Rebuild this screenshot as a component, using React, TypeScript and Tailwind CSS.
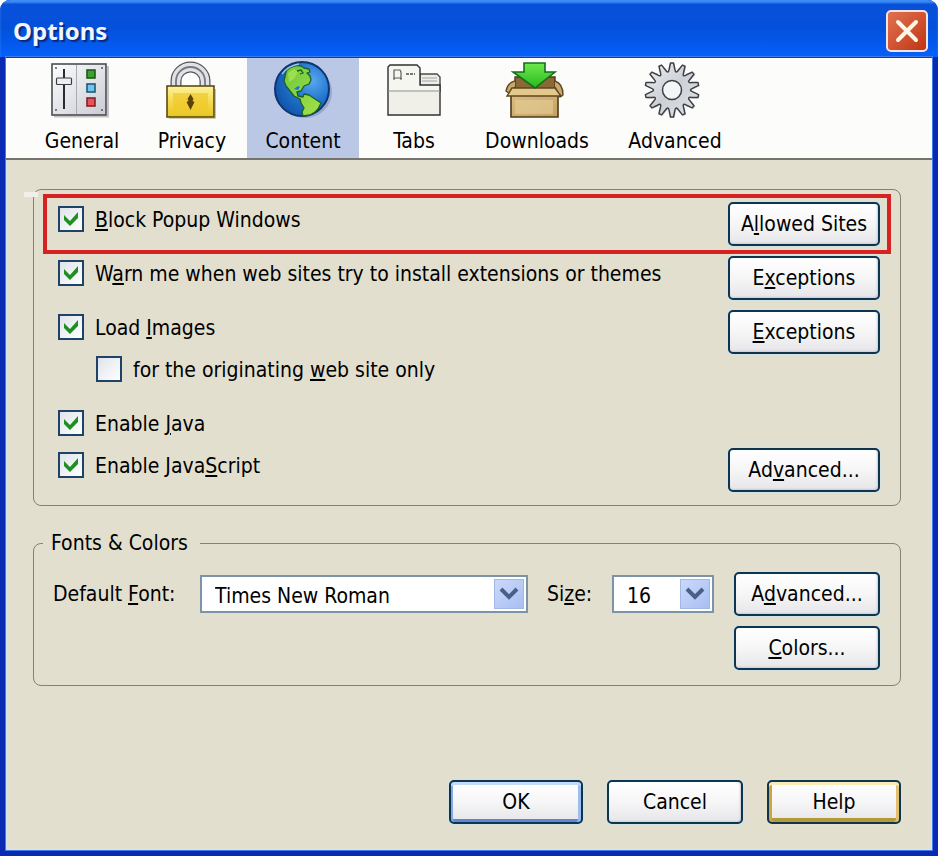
import React, { useState } from 'react';
import type { ReactNode } from 'react';

const FONT = "font-['DejaVu_Sans_Condensed','Noto_Sans',sans-serif]";

function GeneralIcon() {
  return (
    <svg width="64" height="58" viewBox="0 0 64 58" aria-hidden="true">
      <defs>
        <linearGradient id="panel" x1="0" y1="0" x2="1" y2="1">
          <stop offset="0" stopColor="#fdfdfd" />
          <stop offset="1" stopColor="#c9ccd4" />
        </linearGradient>
      </defs>
      <path d="M4 55.500H58V5" fill="none" stroke="#c4c4c4" strokeWidth="2" />
      <rect x="2" y="3" width="54" height="51" fill="url(#panel)" stroke="#4c4d52" strokeWidth="1.6" />
      <path d="M26.500 4V53" stroke="#a9abb2" />
      <path d="M14 8V48" stroke="#2a2b30" strokeWidth="2" />
      <rect x="6.500" y="17" width="15" height="6.500" rx="1" fill="#eceef2" stroke="#3b3c42" strokeWidth="1.200" />
      <rect x="37" y="9" width="8" height="8" fill="#3ea12f" stroke="#1d5c18" strokeWidth="1.600" />
      <rect x="37" y="23" width="8" height="8" fill="#6fc6ec" stroke="#1e5878" strokeWidth="1.600" />
      <rect x="37" y="37" width="8" height="8" fill="#e2585a" stroke="#8a2024" strokeWidth="1.600" />
      <g fill="#55565c">
        <circle cx="6" cy="7" r="1" />
        <circle cx="52" cy="7" r="1" />
        <circle cx="6" cy="49" r="1" />
        <circle cx="52" cy="49" r="1" />
      </g>
    </svg>
  );
}

function PrivacyIcon() {
  return (
    <svg width="54" height="58" viewBox="0 0 54 58" aria-hidden="true">
      <defs>
        <linearGradient id="brass" x1="0" y1="0" x2="0" y2="1">
          <stop offset="0" stopColor="#fdf3a0" />
          <stop offset="0.5" stopColor="#f4da4e" />
          <stop offset="1" stopColor="#e8c51f" />
        </linearGradient>
      </defs>
      <path d="M11 26V20a14.500 14 0 0 1 29 0v6" fill="none" stroke="#55575d" strokeWidth="11" />
      <path d="M11 26V20a14.500 14 0 0 1 29 0v6" fill="none" stroke="#e0e2e6" strokeWidth="8.500" />
      <path d="M11 26V20a14.500 14 0 0 1 29 0v6" fill="none" stroke="#77797f" strokeWidth="1.800" />
      <path d="M4 57.300H50.500V28" fill="none" stroke="#c9c2a0" />
      <rect x="2" y="25" width="47" height="31" fill="url(#brass)" stroke="#5c4a10" strokeWidth="1.600" />
      <rect x="8" y="32" width="35" height="18" fill="#efc828" opacity=".65" />
      <path d="M25.500 33l3 5-1 2 2 1-4 8-4-8 2-1-1-2z" fill="#5a4208" />
    </svg>
  );
}

function ContentIcon() {
  return (
    <svg width="60" height="58" viewBox="0 0 60 58" aria-hidden="true">
      <defs>
        <radialGradient id="sea" cx=".68" cy=".35" r=".7">
          <stop offset="0" stopColor="#5ba8ee" />
          <stop offset=".55" stopColor="#1f74cf" />
          <stop offset="1" stopColor="#1456ac" />
        </radialGradient>
        <linearGradient id="land" x1="0" y1="0" x2="1" y2="1">
          <stop offset="0" stopColor="#6fc93c" />
          <stop offset="1" stopColor="#a4e04a" />
        </linearGradient>
      </defs>
      <ellipse cx="32" cy="31" rx="27" ry="26" fill="#7f93bd" opacity=".6" />
      <circle cx="29" cy="28" r="27" fill="url(#sea)" stroke="#0f3472" strokeWidth="2" />
      <path
        d="M14 9C18 5 24 4 28 5l3 2 5 1 1 3-3 1 3 3 1 4-2 4-5 2-3 5-4 1 1 4 5 1 1-3 5 1 6 4 6 4-3 6-3 3-5 3-7 1-1-4 2-4-3-5-1-4-6-3-4-5-4-5-2-5 2-9z"
        fill="url(#land)"
        stroke="#1c5f2a"
        strokeWidth="1.300"
        strokeLinejoin="round"
      />
      <path d="M15 12l6-4 4 3-4 7-5 3z" fill="#b4ea55" opacity=".6" />
      <path d="M24 10l4-1 2 3-3 1" fill="none" stroke="#1c5f2a" strokeWidth="1.300" />
      <path d="M21 28l4-3 2 1-2 3z" fill="#1f74cf" />
      <path d="M9 13A26 26 0 0 1 26 3" fill="none" stroke="#d2eaff" strokeWidth="1.500" opacity=".7" />
    </svg>
  );
}

function TabsIcon() {
  return (
    <svg width="56" height="54" viewBox="0 0 56 54" aria-hidden="true">
      <path d="M34 11H51l3 3V28H34z" fill="#eeeee9" stroke="#4a4a4a" strokeWidth="1.400" />
      <path d="M2 52V4l2-2H31l3 3V22H54V52z" fill="#f6f6f1" stroke="#303030" strokeWidth="1.400" />
      <path d="M2 28H54" stroke="#8e8e88" />
      <rect x="3" y="29" width="50" height="22" fill="#f0f0e8" />
      <path d="M8 7h6l1 2v6H8zM7 16h2M14 16h2" fill="none" stroke="#5d5d5d" strokeWidth="1.200" />
      <path d="M20 11h9" stroke="#77776f" strokeWidth="2" strokeDasharray="3 1" />
      <path d="M36 15h15M36 18h15" stroke="#a5a59d" />
    </svg>
  );
}

function DownloadsIcon() {
  return (
    <svg width="66" height="58" viewBox="0 0 66 58" aria-hidden="true">
      <defs>
        <linearGradient id="box" x1="0" y1="0" x2="1" y2="1">
          <stop offset="0" stopColor="#d9bd80" />
          <stop offset="1" stopColor="#c5a061" />
        </linearGradient>
        <linearGradient id="arrow" x1="0" y1="0" x2="0" y2="1">
          <stop offset="0" stopColor="#6fe84c" />
          <stop offset="1" stopColor="#27ba20" />
        </linearGradient>
      </defs>
      <path d="M11 16H51V32H11z" fill="#8b6937" stroke="#4e3919" strokeWidth="1.400" />
      <path d="M11 20C6 21 3 25 2 30l3 2 6-6M51 20c6 2 8 8 8 14l-3 2-5-10" fill="#c8a86b" stroke="#5d4621" strokeWidth="1.400" />
      <path d="M7 34H54V56H7z" fill="url(#box)" stroke="#4e3919" strokeWidth="1.600" />
      <path d="M8 27H51l6 8H3z" fill="#e3c88e" stroke="#5d4621" strokeWidth="1.400" />
      <rect x="11" y="39" width="38" height="14" fill="#e6cf99" opacity=".6" />
      <path d="M20 2H41V11H51L31 27 9 11H20z" fill="url(#arrow)" stroke="#12701a" strokeWidth="1.600" />
    </svg>
  );
}

const TEETH = 14;

// one pointed tooth per step, all around the centre
function gearPath() {
  const step = (Math.PI * 2) / TEETH;
  const at = (angle: number, r: number) =>
    `${(29 + Math.sin(angle) * r).toFixed(1)} ${(29 - Math.cos(angle) * r).toFixed(1)}`;
  let d = '';
  for (let i = 0; i < TEETH; i++) {
    const a = i * step;
    d += `${i === 0 ? 'M' : 'L'}${at(a - step * 0.12, 27)}L${at(a + step * 0.12, 27)}`;
    d += `L${at(a + step * 0.3, 21)}Q${at(a + step * 0.5, 16)} ${at(a + step * 0.7, 21)}`;
  }
  return d + 'Z';
}

function AdvancedIcon() {
  return (
    <svg width="64" height="58" viewBox="0 0 64 58" aria-hidden="true">
      <defs>
        <linearGradient id="steel" x1="0" y1="0" x2="1" y2="1">
          <stop offset="0" stopColor="#eceef1" />
          <stop offset=".5" stopColor="#cdd0d6" />
          <stop offset="1" stopColor="#e2e4e8" />
        </linearGradient>
      </defs>
      <path d={gearPath()} transform="translate(1 1)" fill="#b9bbc0" opacity=".6" />
      <path d={gearPath()} fill="url(#steel)" stroke="#3e4046" strokeWidth="1.500" strokeLinejoin="round" />
      <circle cx="29" cy="29" r="9.500" fill="#f4f5f7" stroke="#3e4046" strokeWidth="1.500" />
    </svg>
  );
}

const tabs = [
  { name: 'General', icon: <GeneralIcon />, width: 'w-[110px]' },
  { name: 'Privacy', icon: <PrivacyIcon />, width: 'w-[110px]' },
  { name: 'Content', icon: <ContentIcon />, width: 'w-[112px]' },
  { name: 'Tabs', icon: <TabsIcon />, width: 'w-[110px]' },
  { name: 'Downloads', icon: <DownloadsIcon />, width: 'w-[136px]' },
  { name: 'Advanced', icon: <AdvancedIcon />, width: 'w-[140px]' },
];

function Key({ children }: { children: ReactNode }) {
  return <span className="underline decoration-2 underline-offset-2">{children}</span>;
}

interface CheckProps {
  id: string;
  defaultChecked?: boolean;
  children: ReactNode;
}

function Check({ id, defaultChecked = false, children }: CheckProps) {
  return (
    <div className="flex h-[26px] items-center gap-[11px]">
      <div className="grid shrink-0">
        <input
          id={id}
          type="checkbox"
          defaultChecked={defaultChecked}
          className="peer col-start-1 row-start-1 size-[26px] appearance-none border-2 border-[#1d4468] bg-linear-to-br from-[#dfe3ea] to-white"
        />
        <svg viewBox="0 0 26 26" className="pointer-events-none invisible col-start-1 row-start-1 size-[26px] peer-checked:visible" aria-hidden="true">
          <path d="M6 9l6 6 8-9v6l-8 8-6-6z" fill="#1f8f22" />
        </svg>
      </div>
      <label htmlFor={id} className="pt-[2px] whitespace-nowrap">{children}</label>
    </div>
  );
}

interface XpButtonProps {
  children: ReactNode;
  width: string;
  look?: 'plain' | 'default' | 'hot';
}

function XpButton({ children, width, look = 'plain' }: XpButtonProps) {
  const looks = {
    plain: 'shadow-[inset_-1px_-1px_2px_#c9cbd6,0_0_2px_1px_#d3e3e6]',
    default: 'shadow-[inset_0_3px_0_#c3dbfa,inset_2px_0_0_#86a9e6,inset_-3px_0_0_#9dbcf0,inset_0_-3px_0_#5f86d2,0_0_2px_1px_#d3e3e6]',
    hot: 'shadow-[inset_0_3px_0_#f8ecb8,inset_3px_0_0_#cfa544,inset_-3px_0_0_#e2c070,inset_0_-4px_0_#b5983a,0_0_2px_1px_#e6e3c8]',
  };
  return (
    <button
      type="button"
      className={`h-11 shrink-0 rounded-[5px] border-2 border-[#0d3550] bg-linear-to-b from-white via-[#f6f6f6] to-[#e6e6ea] whitespace-nowrap ${width} ${looks[look]}`}
    >
      {children}
    </button>
  );
}

interface DropDownProps {
  id: string;
  options: string[];
  className: string;
}

function DropDown({ id, options, className }: DropDownProps) {
  return (
    <div className={`grid h-[38px] items-center ${className}`}>
      <select id={id} className="col-start-1 row-start-1 h-full w-full appearance-none border-2 border-[#7d93a8] bg-white pt-1 pl-[13px]">
        {options.map((option) => (
          <option key={option}>{option}</option>
        ))}
      </select>
      <span className="pointer-events-none col-start-1 row-start-1 mr-1 flex h-[30px] w-[30px] items-center justify-center justify-self-end border border-[#a3b7e6] bg-linear-to-br from-[#cbd8fb] to-[#a9bff2]">
        <svg width="20" height="14" viewBox="0 0 20 14" aria-hidden="true">
          <path d="M2 2l8 8 8-8" fill="none" stroke="#4a5f88" strokeWidth="4" />
        </svg>
      </span>
    </div>
  );
}

export default function App() {
  const [active, setActive] = useState('Content');

  return (
    <div className={`flex min-h-screen flex-col overflow-hidden rounded-t-[10px] bg-[#0a2ab4] text-[21px] leading-[26px] text-black ${FONT}`}>
      {/* Title bar */}
      <header className="flex h-[57px] items-center justify-between bg-linear-to-b from-[#0a50d8] via-[#0450dc] to-[#0560fa] pt-1 pr-[10px] pl-[13px] shadow-[inset_0_3px_2px_#3c8cf5]">
        <h1 className="font-['Noto_Sans',sans-serif] text-[24px] font-bold text-[#f0f6ff] [text-shadow:2px_2px_1px_#0a2a80]">Options</h1>
        <button type="button" aria-label="Close" className="flex size-[42px] items-center justify-center rounded-[5px] border-2 border-[#f3e4e6] bg-linear-to-br from-[#e0714f] to-[#bf3410]">
          <svg width="24" height="24" viewBox="0 0 24 24" aria-hidden="true">
            <path d="M3 3l18 18M21 3L3 21" stroke="#fff6e6" strokeWidth="4" strokeLinecap="round" />
          </svg>
        </button>
      </header>

      <div className="mx-[6px] mb-[6px] flex flex-1 flex-col border-t border-[#0a3cb0] bg-[#e2dfce] shadow-[0_0_0_1px_#3f79ea,inset_0_0_0_1px_#d3e8f4]">
        {/* Categories */}
        <nav className="flex h-[102px] border-b-2 border-[#75746c] bg-[#fcfcfb] pl-[21px]">
          {tabs.map((tab) => (
            <button
              key={tab.name}
              type="button"
              onClick={() => setActive(tab.name)}
              className={`flex shrink-0 flex-col items-center justify-between pt-[3px] pb-1 ${tab.width} ${active === tab.name ? 'bg-[#bac8e6]' : ''}`}
            >
              <span className="flex h-[58px] items-center">{tab.icon}</span>
              <span>{tab.name}</span>
            </button>
          ))}
        </nav>

        <main className="flex flex-1 flex-col pt-[29px] pr-[31px] pb-[26px] pl-[27px]">
          <section className="relative rounded-[8px] border border-[#85826f] pt-1 pb-[13px]">
            <span className="absolute top-[2px] -left-[10px] h-[5px] w-[14px] bg-[#f1f0e8]" />
            <div className="mx-[9px] flex items-start justify-between border-4 border-[#d62222] py-1 pr-[7px] pl-[11px]">
              <div className="pt-1">
                <Check id="popups" defaultChecked><Key>B</Key>lock Popup Windows</Check>
              </div>
              <XpButton width="w-[152px]">A<Key>l</Key>lowed Sites</XpButton>
            </div>

            <div className="pr-5 pl-6">
              <div className="mt-[2px] flex items-start justify-between">
                <div className="pt-1">
                  <Check id="warn" defaultChecked>W<Key>a</Key>rn me when web sites try to install extensions or themes</Check>
                </div>
                <XpButton width="w-[152px]">E<Key>x</Key>ceptions</XpButton>
              </div>
              <div className="mt-[10px] flex items-start justify-between">
                <div className="pt-1">
                  <Check id="images" defaultChecked>Load <Key>I</Key>mages</Check>
                </div>
                <XpButton width="w-[152px]"><Key>E</Key>xceptions</XpButton>
              </div>
              <div className="mt-[2px] pl-[38px]">
                <Check id="origin">for the originating <Key>w</Key>eb site only</Check>
              </div>
              <div className="mt-7">
                <Check id="java" defaultChecked>Enable <Key>J</Key>ava</Check>
              </div>
              <div className="mt-3 flex items-start justify-between">
                <div className="pt-1">
                  <Check id="javascript" defaultChecked>Enable Java<Key>S</Key>cript</Check>
                </div>
                <XpButton width="w-[152px]">Ad<Key>v</Key>anced...</XpButton>
              </div>
            </div>
          </section>

          <fieldset className="mt-6 rounded-[8px] border border-[#85826f] pr-5 pb-[15px] pl-[19px]">
            <legend className="-ml-[10px] pr-3 pl-2">Fonts &amp; Colors</legend>
            <div className="mt-4 flex items-center">
              <label htmlFor="font" className="w-[147px] shrink-0">Default <Key>F</Key>ont:</label>
              <DropDown id="font" options={['Times New Roman', 'Arial', 'Verdana']} className="flex-1" />
              <label htmlFor="size" className="w-[84px] shrink-0 pl-[19px]">Si<Key>z</Key>e:</label>
              <DropDown id="size" options={['16', '18', '20']} className="mr-5 w-[102px] shrink-0" />
              <XpButton width="w-[146px]">A<Key>d</Key>vanced...</XpButton>
            </div>
            <div className="mt-[10px] flex justify-end">
              <XpButton width="w-[146px]"><Key>C</Key>olors...</XpButton>
            </div>
          </fieldset>

          <footer className="mt-auto flex justify-end gap-6">
            <XpButton width="w-[134px]" look="default">OK</XpButton>
            <XpButton width="w-[136px]">Cancel</XpButton>
            <XpButton width="w-[134px]" look="hot">Help</XpButton>
          </footer>
        </main>
      </div>
    </div>
  );
}
